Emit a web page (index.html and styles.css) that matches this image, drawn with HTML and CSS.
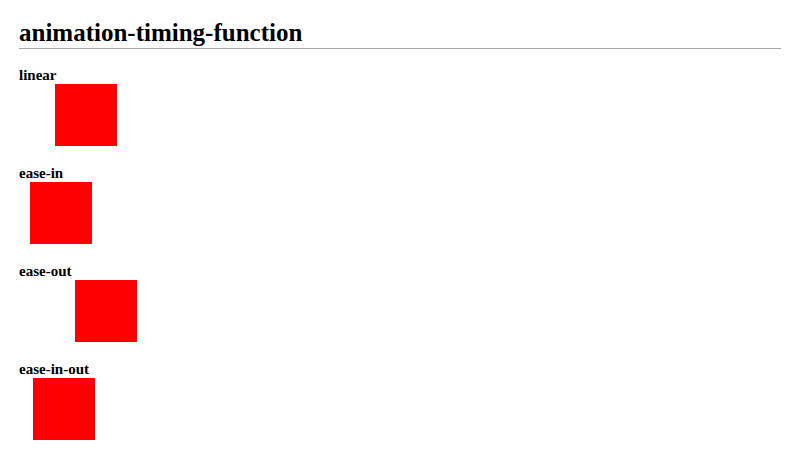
FILE: index.html
```html
<!DOCTYPE html>
<html lang="en">
<head>
    <meta charset="UTF-8">
    <meta name="viewport" content="width=device-width, initial-scale=1.0">
    <title>animation-timing-function</title>
    <link rel="stylesheet" href="styles.css">
</head>
<body>
    <h1 class="title">animation-timing-function</h1>

    <div class="demo">
        <div class="label">linear</div>
        <div class="box" style="margin-left: 36px"></div>
    </div>
    <div class="demo">
        <div class="label">ease-in</div>
        <div class="box" style="margin-left: 11px"></div>
    </div>
    <div class="demo">
        <div class="label">ease-out</div>
        <div class="box" style="margin-left: 56px"></div>
    </div>
    <div class="demo">
        <div class="label">ease-in-out</div>
        <div class="box" style="margin-left: 14px"></div>
    </div>
</body>
</html>
```

FILE: styles.css
```css
body {
    font-family: 'Liberation Serif', 'Times New Roman', serif;
    color: #000;
    background-color: #fff;
    margin: 0;
    padding: 18px 19px 0;
}

.title {
    font-size: 25px;
    line-height: 30px;
    margin: 0;
    border-bottom: 1px solid #aaa;
}

.demo {
    margin-top: 17px;
}

.demo + .demo {
    margin-top: 18px;
}

.label {
    font-weight: bold;
    font-size: 15px;
    line-height: 18px;
}

.box {
    width: 62px;
    height: 62px;
    background-color: #ff0000;
}
```
